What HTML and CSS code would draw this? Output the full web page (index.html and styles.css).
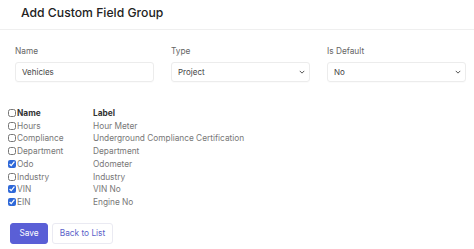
FILE: index.html
```html
<!DOCTYPE html>
<html>
<head>
<meta charset="utf-8">
<link rel="stylesheet" href="styles.css">
</head>
<body>
<div class="page">
  <header class="head"><h1 class="title">Add Custom Field Group</h1></header>
  <div class="body">
    <div class="fields">
      <div class="field">
        <label class="lbl">Name</label>
        <div class="control">Vehicles</div>
      </div>
      <div class="field">
        <label class="lbl">Type</label>
        <div class="control select">Project<svg class="chev" viewBox="0 0 8 5"><path d="M1 1l3 3 3-3" fill="none" stroke="#444" stroke-width="1.2"/></svg></div>
      </div>
      <div class="field">
        <label class="lbl">Is Default</label>
        <div class="control select">No<svg class="chev" viewBox="0 0 8 5"><path d="M1 1l3 3 3-3" fill="none" stroke="#444" stroke-width="1.2"/></svg></div>
      </div>
    </div>
    <table class="grid">
      <tr class="hdr"><td class="c1"><input type="checkbox" class="cb">Name</td><td>Label</td></tr>
      <tr><td class="c1"><input type="checkbox" class="cb">Hours</td><td>Hour Meter</td></tr>
      <tr><td class="c1"><input type="checkbox" class="cb">Compliance</td><td>Underground Compliance Certification</td></tr>
      <tr><td class="c1"><input type="checkbox" class="cb">Department</td><td>Department</td></tr>
      <tr><td class="c1"><input type="checkbox" class="cb" checked>Odo</td><td>Odometer</td></tr>
      <tr><td class="c1"><input type="checkbox" class="cb">Industry</td><td>Industry</td></tr>
      <tr><td class="c1"><input type="checkbox" class="cb" checked>VIN</td><td>VIN No</td></tr>
      <tr><td class="c1"><input type="checkbox" class="cb" checked>EIN</td><td>Engine No</td></tr>
    </table>
    <div class="actions">
      <button class="btn primary">Save</button>
      <button class="btn ghost">Back to List</button>
    </div>
  </div>
</div>
</body>
</html>
```
FILE: styles.css
```css
html, body { margin: 0; padding: 0; background: #fff; }
body { font-family: Inter, "Noto Sans", sans-serif; color: #555; }
.page { width: 474px; height: 249px; overflow: hidden; }
.head { border-bottom: 1px solid #efefef; padding: 0 21px 4px; box-sizing: border-box; height: 30px; display: flex; align-items: center; }
.title { margin: 0; font-size: 12.2px; font-weight: 500; color: #222; }
.body { padding: 16px 8px 0 15px; }
.fields { display: flex; gap: 17px; }
.field { flex: 1; display: flex; flex-direction: column; gap: 6px; }
.lbl { font-size: 8.3px; color: #666; line-height: 10px; }
.control { height: 20px; box-sizing: border-box; border: 1px solid #ececec; border-radius: 3px; padding: 0 4px 0 6px; font-size: 8px; color: #444; display: flex; align-items: center; justify-content: space-between; box-shadow: 0 1px 1px rgba(0,0,0,0.02); }
.chev { width: 6px; height: 4px; }
.grid { border-collapse: collapse; margin-top: 25px; margin-left: -7px; font-size: 8.3px; }
.grid td { padding: 0; height: 12.7px; line-height: 12.7px; color: #777; white-space: nowrap; }
.grid .c1 { width: 85px; }
.hdr td { color: #333; font-weight: 700; }
.cb { width: 8px; height: 8px; margin: 0 1px 0 0; vertical-align: -1px; accent-color: #2f68d8; }
.actions { display: flex; gap: 4px; margin-top: 14px; margin-left: -5px; }
.btn { height: 21px; box-sizing: border-box; border-radius: 3px; font-family: inherit; font-size: 8.3px; padding: 0; cursor: pointer; }
.primary { background: #5a5fd6; color: #fff; border: 1px solid #5a5fd6; width: 38px; }
.ghost { background: #fff; color: #5a5fc9; border: 1px solid #eaeaf2; width: 61px; }
```
